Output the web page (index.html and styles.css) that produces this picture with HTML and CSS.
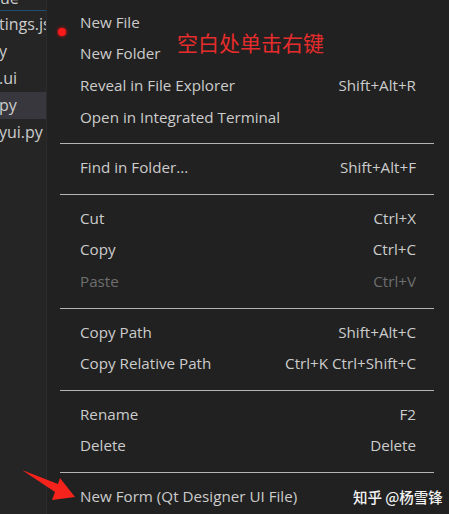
FILE: index.html
```html
<!DOCTYPE html>
<html>
<head>
<meta charset="utf-8">
<link rel="stylesheet" href="styles.css">
</head>
<body>
<div class="screen">
  <aside class="sidebar">
    <div class="tabhead"><span>ue</span></div>
    <div class="file">tings.js</div>
    <div class="file">y</div>
    <div class="file">.ui</div>
    <div class="file active">py</div>
    <div class="file">yui.py</div>
  </aside>
  <div class="menu">
    <div class="item"><span>New File</span></div>
    <div class="item"><span>New Folder</span></div>
    <div class="item"><span>Reveal in File Explorer</span><span class="key">Shift+Alt+R</span></div>
    <div class="item"><span>Open in Integrated Terminal</span></div>
    <div class="sep"></div>
    <div class="item"><span>Find in Folder...</span><span class="key">Shift+Alt+F</span></div>
    <div class="sep"></div>
    <div class="item"><span>Cut</span><span class="key">Ctrl+X</span></div>
    <div class="item"><span>Copy</span><span class="key">Ctrl+C</span></div>
    <div class="item disabled"><span>Paste</span><span class="key">Ctrl+V</span></div>
    <div class="sep"></div>
    <div class="item"><span>Copy Path</span><span class="key">Shift+Alt+C</span></div>
    <div class="item"><span>Copy Relative Path</span><span class="key">Ctrl+K Ctrl+Shift+C</span></div>
    <div class="sep"></div>
    <div class="item"><span>Rename</span><span class="key">F2</span></div>
    <div class="item"><span>Delete</span><span class="key">Delete</span></div>
    <div class="sep"></div>
    <div class="item"><span>New Form (Qt Designer UI File)</span></div>
  </div>

  <div class="dot"></div>
  <div class="note">空白处单击右键</div>
  <svg class="arrow" width="60" height="40" viewBox="0 0 60 40">
    <polygon points="0,0 36,14 38,8 53,27 30,30 33,22" fill="#f5231c"/>
  </svg>
  <div class="watermark">知乎 @杨雪锋</div>
</div>
</body>
</html>
```
FILE: styles.css
```css
html, body {
  margin: 0;
  padding: 0;
  background: #212121;
}
.screen {
  position: relative;
  width: 449px;
  height: 514px;
  overflow: hidden;
  display: flex;
  font-family: "Open Sans", "Noto Sans", "Noto Sans CJK SC", sans-serif;
}
.sidebar {
  width: 46px;
  flex: none;
  background: #252526;
  border-right: 1px solid #2c2c2c;
  overflow: hidden;
  color: #cccccc;
  font-size: 16px;
}
.tabhead {
  height: 10px;
  border-bottom: 1px solid #1f4e72;
  overflow: hidden;
  line-height: 10px;
}
.tabhead span {
  display: block;
  margin-top: -7px;
  line-height: 10px;
}
.file {
  height: 27px;
  line-height: 27px;
  white-space: nowrap;
  margin-left: -1px;
}
.file.active {
  background: #37373d;
}
.menu {
  flex: 1;
  background: #212121;
  padding-top: 6px;
  display: flex;
  flex-direction: column;
  color: #cccccc;
  font-size: 15.2px;
}
.item {
  height: 31.6px;
  display: flex;
  align-items: center;
  justify-content: space-between;
  padding: 0 33px 0 33px;
  white-space: nowrap;
}
.item.disabled {
  color: #6e6e6e;
}
.sep {
  box-sizing: border-box;
  margin: 0 15px 7px 13px;
  border-bottom: 1px solid #b4b4b4;
  height: 12px;
}
.dot {
  position: absolute;
  left: 58px;
  top: 28px;
  width: 8px;
  height: 8px;
  border-radius: 50%;
  background: #ff1a1a;
  box-shadow: 0 0 3px 1px rgba(200, 20, 20, 0.7);
}
.note {
  position: absolute;
  left: 177px;
  top: 29px;
  color: #e62c2c;
  font-size: 21px;
  line-height: 26px;
  font-family: "Noto Sans CJK SC", sans-serif;
}
.arrow {
  position: absolute;
  left: 22px;
  top: 470px;
}
.watermark {
  position: absolute;
  left: 353px;
  top: 486px;
  color: #f2f2f2;
  font-size: 14.5px;
  line-height: 22px;
  font-family: "Noto Sans CJK SC", sans-serif;
  font-weight: 500;
}
```
